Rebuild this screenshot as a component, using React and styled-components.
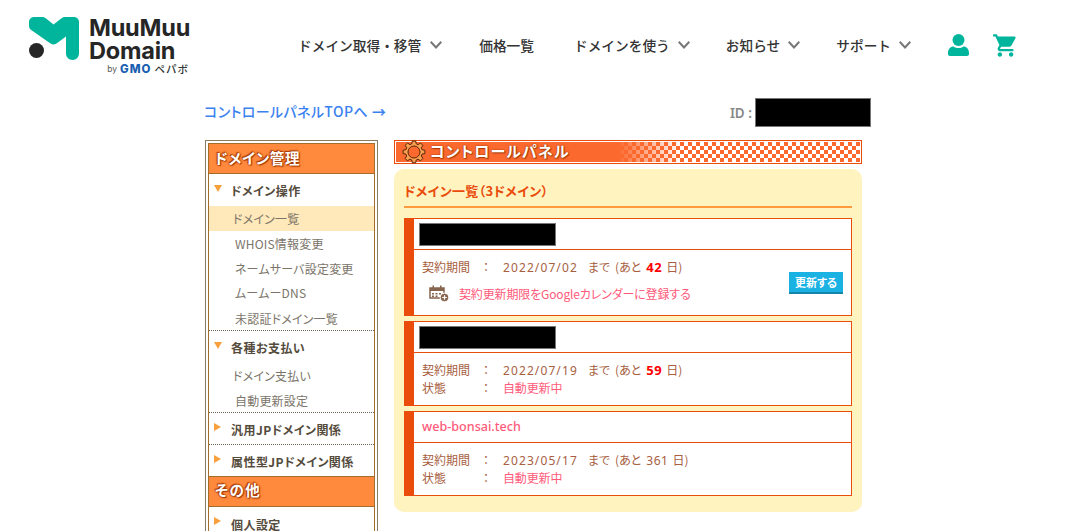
import React from "react";
import styled, { createGlobalStyle } from "styled-components";
import { MdShoppingCart } from "react-icons/md";

const JP = `"Noto Sans CJK JP", "Noto Sans", "Liberation Sans", sans-serif`;

const Global = createGlobalStyle`
  html, body { margin: 0; padding: 0; background: #fff; }
  body { width: 1072px; height: 531px; overflow: hidden; font-family: ${JP}; }
  * { box-sizing: border-box; }
`;

const Header = styled.header`
  height: 98px;
  display: flex;
  align-items: flex-start;
  padding: 17px 0 0 29px;
`;
const Logo = styled.div`
  width: 160px;
  height: 57px;
  display: flex;
  flex: none;
`;
const MarkWrap = styled.div`
  position: relative;
  width: 50px;
  flex: none;
`;
const Dot = styled.span`
  position: absolute;
  left: 0;
  top: 26px;
  width: 15px;
  height: 15px;
  border-radius: 50%;
  background: #262626;
`;
const LogoText = styled.div`
  margin-left: 10px;
  width: 100px;
  display: flex;
  flex-direction: column;
  color: #262626;
  font-family: Inter, "Noto Sans", sans-serif;
  font-weight: 700;
`;
const LogoLine = styled.div`
  font-size: 23.5px;
  line-height: 22px;
  height: 22.500px;
  letter-spacing: -0.2px;
  white-space: nowrap;
`;
const LogoBy = styled.div`
  margin: 2px 0 0 -17px;
  line-height: 10px;
  display: flex;
  align-items: center;
  justify-content: flex-end;
  gap: 3px;
  white-space: nowrap;
`;
const By = styled.span`
  font-size: 8.500px;
  color: #555;
  font-weight: 400;
`;
const Gmo = styled.span`
  color: #1a5fb0;
  font-weight: 800;
  font-size: 11.500px;
  letter-spacing: 1px;
`;
const Pepabo = styled.span`
  color: #333;
  font-family: ${JP};
  font-size: 10.500px;
  font-weight: 500;
  letter-spacing: 1px;
`;
const Nav = styled.nav`
  margin: 12px 0 0 109px;
  height: 32px;
  display: flex;
  align-items: center;
  gap: 36px;
`;
const NavItem = styled.div`
  display: flex;
  align-items: center;
  gap: ${(p) => p.$gap || 8}px;
  margin-right: ${(p) => p.$after || 0}px;
  font-size: 13.700px;
  font-weight: 500;
  color: #333;
  white-space: nowrap;
  line-height: 20px;
`;
const IconBtn = styled.div`
  display: flex;
  align-items: center;
  justify-content: center;
  color: #00b59c;
  margin-left: ${(p) => p.$ml || 0}px;
`;
const SubRow = styled.div`
  margin-left: 204px;
  width: 667px;
  height: 29px;
  display: flex;
  align-items: center;
  justify-content: space-between;
`;
const TopLink = styled.a`
  color: #3b82f0;
  font-size: 14px;
  font-weight: 500;
  padding-bottom: 3px;
  font-feature-settings: "palt";
  letter-spacing: 0.4px;
  display: flex;
  align-items: center;
  gap: 4px;
`;
const Arrow = styled.span`
  font-weight: 700;
`;
const IdWrap = styled.div`
  display: flex;
  align-items: center;
  gap: 3px;
  font-family: "Noto Sans", sans-serif;
  font-size: 13.500px;
  font-weight: 600;
  color: #888;
`;
const Redact = styled.div`
  width: ${(p) => p.$w}px;
  height: ${(p) => p.$h}px;
  background: #000;
  border: 1px solid #777;
`;
const Content = styled.div`
  margin: 13px 0 0 205px;
  display: flex;
  gap: 16px;
  align-items: flex-start;
`;
const Side = styled.aside`
  width: 173px;
  flex: none;
  border: 1px solid #8c7b60;
  padding: 2px;
  height: 400px;
`;
const SideInner = styled.div`
  border: 1px solid #a36d2c;
  border-bottom: 0;
  background: #fff;
  height: 100%;
  font-feature-settings: "palt";
`;
const SideHead = styled.div`
  height: ${(p) => p.$h || 30}px;
  background: #ff8a3d;
  border-bottom: 1px solid #a36d2c;
  border-top: ${(p) => (p.$top ? "1px solid #a36d2c" : "0")};
  padding: 0 0 ${(p) => p.$pb ?? 3}px 6px;
  display: flex;
  align-items: center;
  font-size: 14.500px;
  font-weight: 700;
  color: #fff;
  letter-spacing: ${(p) => p.$ls || 0.7}px;
  text-shadow: 0 0 2px #a83c05, 0 0 2px #a83c05, 1px 1px 1px #a83c05, -1px -1px 1px #a83c05;
`;
const Group = styled.div`
  height: ${(p) => p.$h || 32}px;
  display: flex;
  align-items: center;
  position: relative;
  padding: ${(p) => p.$pt || 0}px 0 0 22px;
  font-size: 12px;
  font-weight: 700;
  color: #544b3c;
  letter-spacing: 0.45px;
  border-bottom: ${(p) => (p.$dotted ? "1px dotted #6e6357" : "0")};
`;
const Tri = styled.span`
  position: absolute;
  left: 5px;
  top: ${(p) => (p.$open ? 11 : 10)}px;
  width: 0;
  height: 0;
  ${(p) =>
    p.$open
      ? `border-left: 4.5px solid transparent; border-right: 4.5px solid transparent; border-top: 7px solid #f7a03c;`
      : `border-top: 4.5px solid transparent; border-bottom: 4.5px solid transparent; border-left: 7px solid #f7a03c;`}
`;
const SideItem = styled.div`
  height: 25px;
  display: flex;
  align-items: center;
  padding: 0 0 ${(p) => p.$pb || 0}px ${(p) => p.$pl || 26}px;
  font-size: 12px;
  color: #7b7469;
  letter-spacing: 0.2px;
  background: ${(p) => (p.$active ? "#ffe8b9" : "transparent")};
  border-bottom: ${(p) => (p.$dotted ? "1px dotted #6e6357" : "0")};
`;
const Main = styled.main`
  width: 468px;
  flex: none;
`;
const Banner = styled.div`
  height: 24px;
  border: 1px solid #ea4c0c;
  padding: 1px;
  background: #fff;
`;
const BannerFill = styled.div`
  height: 100%;
  padding-left: 6px;
  display: flex;
  align-items: center;
  gap: 4px;
  color: #fff;
  font-size: 15px;
  font-weight: 700;
  letter-spacing: 1.1px;
  text-shadow: 0 0 2px #a83c05, 0 0 1px #a83c05, 1px 1px 1px #a83c05;
  font-feature-settings: "palt";
  background-image:
    linear-gradient(90deg, #fb692f 0, #fb692f 222px, rgba(251, 105, 47, 0) 285px),
    repeating-conic-gradient(#fb692f 0 25%, #fff 0 50%);
  background-size: 100% 100%, 8px 8px;
`;
const BannerLabel = styled.span`
  padding-bottom: 3px;
`;
const Panel = styled.section`
  margin-top: 5px;
  height: 343px;
  background: #fff3bf;
  border-radius: 10px;
  padding: 10px;
`;
const PanelTitle = styled.h2`
  margin: 0 0 10px;
  height: 29px;
  border-bottom: 2px solid #ff9a40;
  padding-bottom: 5px;
  display: flex;
  align-items: center;
  color: #ea4c0c;
  font-size: 13px;
  font-weight: 700;
  font-feature-settings: "palt";
  letter-spacing: 0.35px;
`;
const Card = styled.article`
  border: 1px solid #ea4c0c;
  border-left-width: 10px;
  background: #fff;
  margin-bottom: 5px;
  height: ${(p) => p.$h}px;
`;
const CardHead = styled.div`
  height: 31px;
  border-bottom: 1px solid #ea4c0c;
  padding: 0 0 ${(p) => (p.$text ? 2 : 0)}px ${(p) => (p.$text ? 8 : 5)}px;
  display: flex;
  align-items: center;
  color: #ff5a7a;
  font-family: "Noto Sans", sans-serif;
  font-size: 12.600px;
  font-weight: 500;
`;
const CardBody = styled.div`
  position: relative;
  padding: 8px 0 0 8px;
  font-size: 12px;
  color: #a8603f;
`;
const InfoRow = styled.div`
  display: grid;
  grid-template-columns: 58px 23px 1fr;
  height: 18px;
  line-height: 18px;
  white-space: nowrap;
`;
const Term = styled.span`
  display: flex;
  align-items: baseline;
`;
const DateText = styled.span`
  font-family: "Noto Sans", ${JP};
  letter-spacing: 1.1px;
`;
const Seg = styled.span`
  margin-left: ${(p) => p.$ml}px;
  font-feature-settings: "palt";
`;
const Days = styled.span`
  margin-left: 5px;
  font-family: "Noto Sans", ${JP};
  color: ${(p) => (p.$plain ? "inherit" : "#f00")};
  font-weight: ${(p) => (p.$plain ? 400 : 700)};
  font-size: ${(p) => (p.$plain ? 12 : 13)}px;
  letter-spacing: 0.5px;
`;
const Pink = styled.span`
  color: #ff5a7a;
  font-feature-settings: "palt";
  letter-spacing: -0.15px;
`;
const CalRow = styled.div`
  display: flex;
  align-items: center;
  gap: 10px;
  margin: 8px 0 0 7px;
  height: 18px;
  white-space: nowrap;
`;
const Renew = styled.button`
  position: absolute;
  right: 8px;
  top: 22px;
  width: 54px;
  height: 22px;
  padding: 0;
  border: 0;
  border-bottom: 2px solid #1585ad;
  background: #1ab2e3;
  color: #fff;
  font-family: ${JP};
  font-size: 11px;
  font-weight: 700;
  font-feature-settings: "palt";
`;

const Chevron = () => (
  <svg width="12" height="8" viewBox="0 0 12 8" fill="none" stroke="#777" strokeWidth="2">
    <path d="M.7.8 6 6.5 11.3.8" />
  </svg>
);
const Mark = () => (
  <svg width="50" height="43" viewBox="0 0 50 43" style={{ flex: "none" }}>
    <path
      fill="#00b59c"
      d="M5 0h8c1.500 0 2.600.4 3.800 1.300L24.500 7.500 32.500 1.300C33.700.4 34.800 0 36.300 0H45c2.800 0 5 2.200 5 5v31.500c0 3.600-2.900 6.500-6.500 6.500S37 40.100 37 36.500V19.500L27.500 26.500c-2 1.400-4 1.400-6 0L2.200 13C.8 12 0 10.500 0 8.700V5C0 2.200 2.200 0 5 0Z"
    />
  </svg>
);
const Gear = () => (
  <svg width="24" height="24" viewBox="0 0 24 24" style={{ flex: "none" }}>
    <path
      fill="#f8a050"
      stroke="#5a2408"
      strokeWidth="1"
      d="M10.300 1h3.400l.5 2.800 1.900.8 2.400-1.600 2.400 2.400-1.600 2.400.8 1.900 2.800.5v3.400l-2.800.5-.8 1.900 1.600 2.400-2.400 2.400-2.400-1.600-1.900.8-.5 2.800h-3.400l-.5-2.800-1.900-.8-2.400 1.600-2.400-2.400 1.600-2.400-.8-1.900-2.800-.5v-3.400l2.800-.5.8-1.900-1.600-2.400L5.500 3l2.400 1.600 1.900-.8Z"
    />
    <circle cx="12" cy="12" r="6" fill="#fb692f" stroke="#5a2408" strokeWidth="1" />
  </svg>
);
const Calendar = () => (
  <svg width="20" height="17" viewBox="0 0 20 17" style={{ flex: "none" }}>
    <path fill="none" stroke="#86644e" strokeWidth="1.500" d="M1 3h14v10H1z" />
    <path fill="#86644e" d="M1 3h14v3H1zM3.500 0.500h1.500v4H3.500zM11 .5h1.500v4H11zM3 8h2v1.500H3zM6.500 8h2v1.500h-2zM10 8h2v1.500h-2zM3 10.500h2V12H3zM6.500 10.500h2V12h-2z" />
    <circle cx="15.500" cy="12.500" r="4.300" fill="#86644e" stroke="#fff" />
    <path stroke="#fff" strokeWidth="1.200" d="M13.200 12.500h4.600M15.500 10.200v4.600" />
  </svg>
);
const User = () => (
  <svg width="21" height="22" viewBox="0 0 21 22" fill="currentColor">
    <circle cx="10.500" cy="6" r="6" />
    <path d="M0 19c0-4 2.500-6.500 5.500-6.500 1.500 1 3 1.500 5 1.500s3.500-.5 5-1.500c3 0 5.500 2.500 5.500 6.500v1c0 1.200-.8 2-2 2H2c-1.200 0-2-.8-2-2Z" />
  </svg>
);

const TermText = ({ date, days, plain }) => (
  <Term>
    <DateText>{date}</DateText>
    <Seg $ml={10}>まで</Seg>
    <Seg $ml={5}>(あと</Seg>
    <Days $plain={plain}>{days}</Days>
    <Seg $ml={4}>日)</Seg>
  </Term>
);

const App = () => (
  <>
    <Global />
    <Header>
      <Logo>
        <MarkWrap>
          <Mark />
          <Dot />
        </MarkWrap>
        <LogoText>
          <LogoLine>MuuMuu</LogoLine>
          <LogoLine>Domain</LogoLine>
          <LogoBy>
            <By>by</By><Gmo>GMO</Gmo><Pepabo>ペパボ</Pepabo>
          </LogoBy>
        </LogoText>
      </Logo>
      <Nav>
        <NavItem $gap={9} $after={1}>ドメイン取得・移管<Chevron /></NavItem>
        <NavItem $after={4}>価格一覧</NavItem>
        <NavItem>ドメインを使う<Chevron /></NavItem>
        <NavItem>お知らせ<Chevron /></NavItem>
        <NavItem $after={1}>サポート<Chevron /></NavItem>
        <IconBtn><User /></IconBtn>
        <IconBtn $ml={-13}><MdShoppingCart size={27} /></IconBtn>
      </Nav>
    </Header>
    <SubRow>
      <TopLink>コントロールパネルTOPへ <Arrow>→</Arrow></TopLink>
      <IdWrap>ID :<Redact $w={116} $h={29} /></IdWrap>
    </SubRow>
    <Content>
      <Side>
        <SideInner>
          <SideHead>ドメイン管理</SideHead>
          <Group $pt={1}><Tri $open />ドメイン操作</Group>
          <SideItem $active $pl={24}>ドメイン一覧</SideItem>
          <SideItem>WHOIS情報変更</SideItem>
          <SideItem>ネームサーバ設定変更</SideItem>
          <SideItem $pb={2}>ムームーDNS</SideItem>
          <SideItem $dotted>未認証ドメイン一覧</SideItem>
          <Group><Tri $open />各種お支払い</Group>
          <SideItem $pl={24}>ドメイン支払い</SideItem>
          <SideItem $dotted>自動更新設定</SideItem>
          <Group $dotted $pt={2}><Tri />汎用JPドメイン関係</Group>
          <Group $h={31} $pt={2}><Tri />属性型JPドメイン関係</Group>
          <SideHead $top $h={31} $ls={1.500} $pb={4}>その他</SideHead>
          <Group $pt={2}><Tri />個人設定</Group>
        </SideInner>
      </Side>
      <Main>
        <Banner>
          <BannerFill><Gear /><BannerLabel>コントロールパネル</BannerLabel></BannerFill>
        </Banner>
        <Panel>
          <PanelTitle>ドメイン一覧（3ドメイン）</PanelTitle>
          <Card $h={98}>
            <CardHead><Redact $w={137} $h={23} /></CardHead>
            <CardBody>
              <InfoRow>
                <span>契約期間</span><span>：</span>
                <TermText date="2022/07/02" days="42" />
              </InfoRow>
              <CalRow>
                <Calendar />
                <Pink>契約更新期限をGoogleカレンダーに登録する</Pink>
              </CalRow>
              <Renew>更新する</Renew>
            </CardBody>
          </Card>
          <Card $h={85}>
            <CardHead><Redact $w={137} $h={23} /></CardHead>
            <CardBody>
              <InfoRow>
                <span>契約期間</span><span>：</span>
                <TermText date="2022/07/19" days="59" />
              </InfoRow>
              <InfoRow>
                <span>状態</span><span>：</span>
                <Pink>自動更新中</Pink>
              </InfoRow>
            </CardBody>
          </Card>
          <Card $h={85}>
            <CardHead $text>web-bonsai.tech</CardHead>
            <CardBody>
              <InfoRow>
                <span>契約期間</span><span>：</span>
                <TermText date="2023/05/17" days="361" plain />
              </InfoRow>
              <InfoRow>
                <span>状態</span><span>：</span>
                <Pink>自動更新中</Pink>
              </InfoRow>
            </CardBody>
          </Card>
        </Panel>
      </Main>
    </Content>
  </>
);

export default App;
